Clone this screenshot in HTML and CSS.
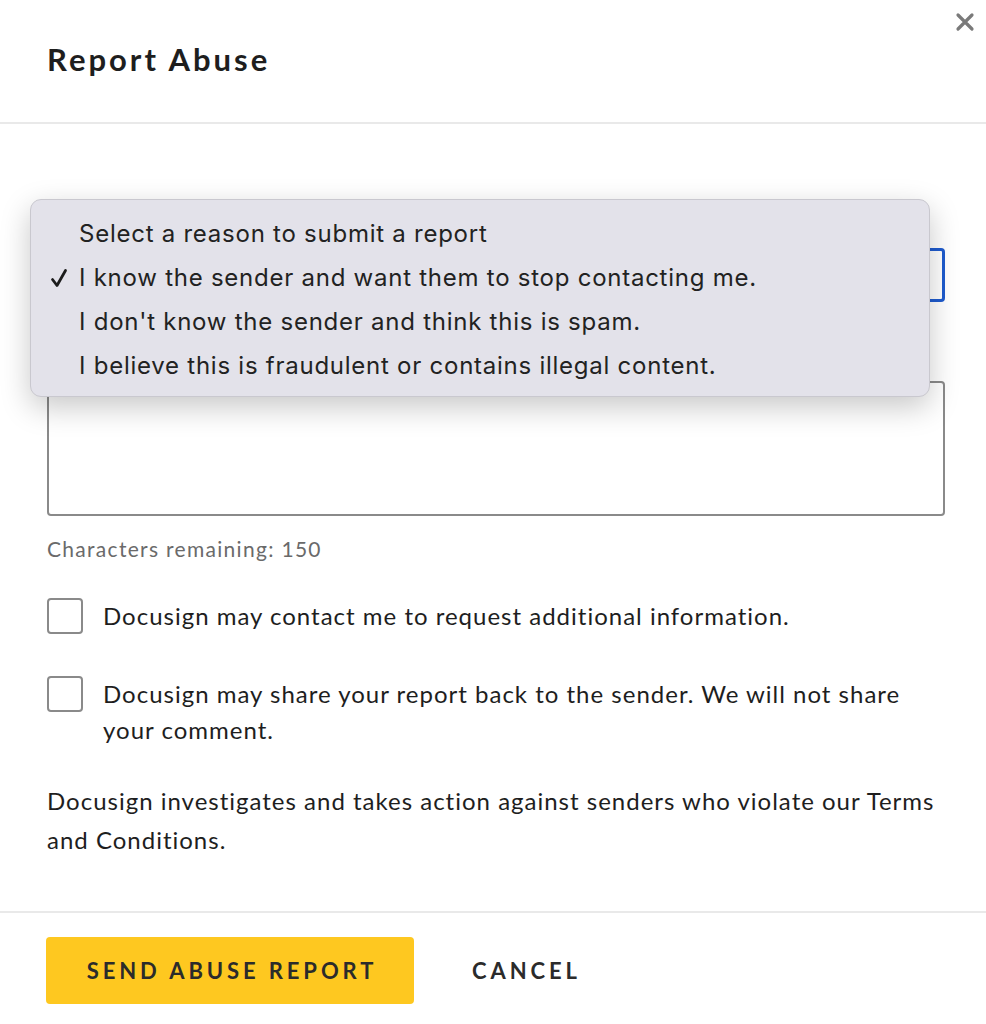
FILE: index.html
```html
<!DOCTYPE html>
<html lang="en">
<head>
<meta charset="utf-8">
<title>Report Abuse</title>
<link rel="stylesheet" href="styles.css">
</head>
<body>
<div class="modal">
  <header class="modal-header">
    <h1 class="modal-title">Report Abuse</h1>
    <button class="close" aria-label="Close">
      <svg width="20" height="20" viewBox="0 0 20 20"><path d="M3 3 L17 17 M17 3 L3 17" stroke="#7a7a7a" stroke-width="3.2" stroke-linecap="round"/></svg>
    </button>
  </header>

  <main class="modal-body">
    <div class="field-reason">
      <div class="select-box" role="combobox" aria-label="Reason for report" aria-expanded="true"></div>
      <ul class="options" role="listbox">
        <li class="option">Select a reason to submit a report</li>
        <li class="option selected">
          <svg class="check" width="18" height="20" viewBox="0 0 18 20"><path d="M2.5 11.5 L7 17.5 L15.5 2.5" fill="none" stroke="#1c1c1c" stroke-width="2.8" stroke-linecap="round" stroke-linejoin="round"/></svg>I know the sender and want them to stop contacting me.
        </li>
        <li class="option">I don't know the sender and think this is spam.</li>
        <li class="option">I believe this is fraudulent or contains illegal content.</li>
      </ul>
    </div>

    <div class="field-comment">
      <textarea class="comment" aria-label="Comment"></textarea>
      <p class="hint">Characters remaining: 150</p>
    </div>

    <label class="check-row">
      <span class="box"></span>
      <span class="check-text">Docusign may contact me to request additional information.</span>
    </label>
    <label class="check-row">
      <span class="box"></span>
      <span class="check-text">Docusign may share your report back to the sender. We will not share your comment.</span>
    </label>

    <p class="notice">Docusign investigates and takes action against senders who violate our Terms and Conditions.</p>
  </main>

  <footer class="modal-footer">
    <button class="btn btn-primary">SEND ABUSE REPORT</button>
    <button class="btn btn-text">CANCEL</button>
  </footer>
</div>
</body>
</html>
```

FILE: styles.css
```css
* { box-sizing: border-box; }

html, body {
  margin: 0;
  background: #fff;
}

body {
  font-family: "Lato", "Liberation Sans", sans-serif;
  color: #1e1e1e;
}

.modal {
  width: 986px;
  min-height: 1024px;
  display: flex;
  flex-direction: column;
}

/* header */
.modal-header {
  height: 124px;
  padding: 0 47px;
  display: flex;
  align-items: flex-start;
  border-bottom: 2px solid #e9e9e9;
  position: relative;
}

.modal-title {
  margin: 37px 0 0;
  font-size: 31px;
  font-weight: 700;
  letter-spacing: 3px;
  color: #1e1e1e;
  line-height: 44px;
}

.close {
  position: absolute;
  top: 12px;
  right: 11px;
  border: 0;
  background: none;
  padding: 0;
  width: 20px;
  height: 20px;
}

/* body */
.modal-body {
  padding: 0 41px 0 47px;
  flex: 1;
}

.field-reason {
  position: relative;
  padding-top: 124px;
}

.select-box {
  height: 54px;
  border: 3px solid #1e5bce;
  border-radius: 4px;
}

/* open native-style option list */
.options {
  position: absolute;
  top: 75px;
  left: -17px;
  width: 900px;
  margin: 0;
  padding: 12px 0 8px;
  list-style: none;
  background: #e3e2ea;
  border: 1px solid #c9c8cf;
  border-radius: 11px;
  box-shadow: 0 10px 30px rgba(0, 0, 0, 0.22);
  font-family: "Inter", "Roboto", sans-serif;
  z-index: 2;
}

.option {
  position: relative;
  height: 44px;
  line-height: 44px;
  padding-left: 48px;
  font-size: 24px;
  color: #222;
  letter-spacing: 0.75px;
  white-space: nowrap;
}

.check {
  position: absolute;
  left: 19px;
  top: 12px;
}

.field-comment {
  margin-top: 79px;
}

.comment {
  display: block;
  width: 100%;
  height: 135px;
  border: 2px solid #8a8a8a;
  border-radius: 4px;
  resize: none;
  font: inherit;
}

.hint {
  margin: 19px 0 0;
  font-size: 21px;
  letter-spacing: 1.3px;
  color: #6a6a6a;
  line-height: 28px;
}

.check-row {
  display: flex;
  align-items: flex-start;
  gap: 20px;
  font-size: 24px;
  letter-spacing: 1px;
  line-height: 36px;
  margin-top: 35px;
}

.check-row + .check-row {
  margin-top: 42px;
}

.box {
  flex: none;
  width: 36px;
  height: 36px;
  border: 2px solid #8a8a8a;
  border-radius: 4px;
  background: #fff;
}

.check-text {
  color: #1e1e1e;
}

.notice {
  margin: 33px 0 0;
  font-size: 24px;
  letter-spacing: 1px;
  line-height: 39px;
  color: #1e1e1e;
}

/* footer */
.modal-footer {
  border-top: 2px solid #e9e9e9;
  padding: 24px 47px 20px 46px;
  display: flex;
  align-items: center;
  gap: 58px;
}

.btn {
  font-family: "Lato", sans-serif;
  font-size: 22px;
  font-weight: 700;
  letter-spacing: 3.9px;
  color: #2b2b2b;
  border: 0;
  cursor: pointer;
}

.btn-primary {
  width: 368px;
  height: 67px;
  padding: 0 0 0 4px;
  background: #fec820;
  border-radius: 4px;
}

.btn-text {
  background: none;
  padding: 0;
}
```
